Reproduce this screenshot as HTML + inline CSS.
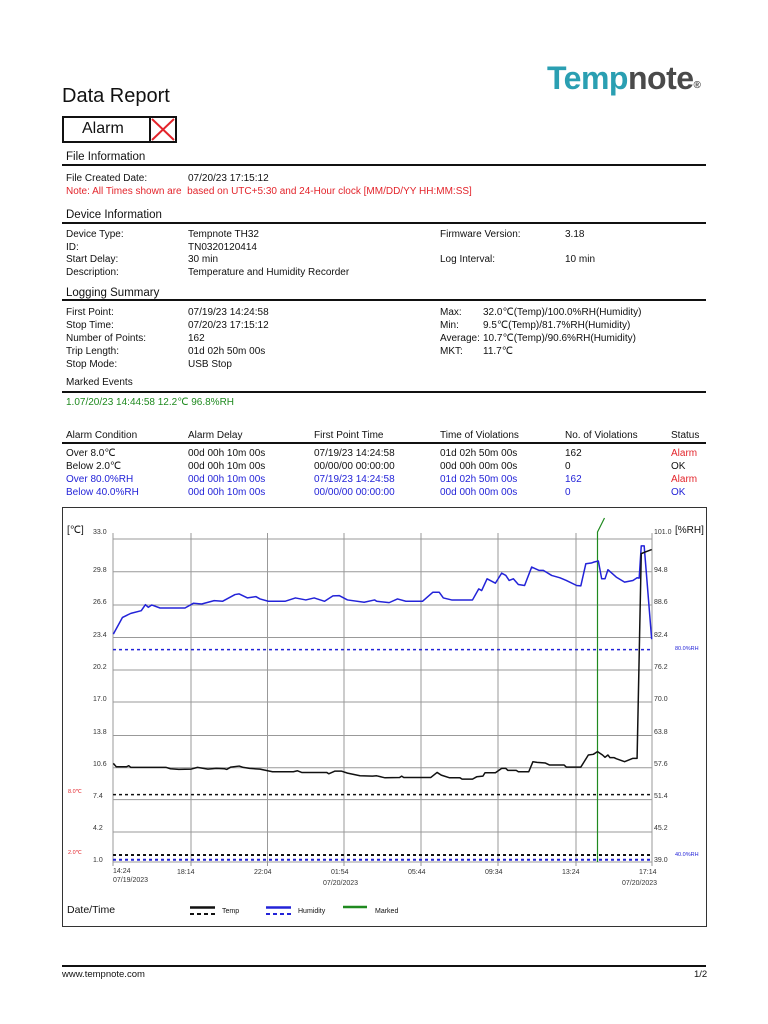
<!DOCTYPE html>
<html><head><meta charset="utf-8"><style>
*{margin:0;padding:0;box-sizing:border-box}
body{width:768px;height:1024px;background:#fff;position:relative;font-family:"Liberation Sans",Arial,sans-serif;color:#111;overflow:hidden}
.t{position:absolute;font-size:10px;line-height:12px;white-space:nowrap}
.h{position:absolute;font-size:11.5px;line-height:14px;white-space:nowrap;left:66px}
.ln{position:absolute;left:62px;width:644px;height:2px;background:#111}
.r{color:#e3242b}.b{color:#2323d8}.g{color:#1f8a1f}
</style></head><body>
<div class="t" style="left:62px;top:84px;font-size:20px;line-height:24px">Data Report</div>
<div style="position:absolute;left:547px;top:60px;font-size:32px;font-weight:bold;line-height:36px;letter-spacing:-0.5px"><span style="color:#2a9fb2">Temp</span><span style="color:#4a4a4a">note</span><sup style="font-size:10px;color:#4a4a4a;vertical-align:top;position:relative;top:8px">®</sup></div>
<div style="position:absolute;left:62px;top:116px;width:115px;height:27px;border:2px solid #111"></div>
<div style="position:absolute;left:149px;top:116px;width:2px;height:27px;background:#111"></div>
<svg style="position:absolute;left:151px;top:118px" width="24" height="23"><path d="M1 1L23 22M23 1L1 22" stroke="#e3242b" stroke-width="2"/></svg>
<div class="t" style="left:82px;top:120px;font-size:16px;line-height:18px">Alarm</div>

<div class="h" style="top:150px">File Information</div><div class="ln" style="top:164px"></div>
<div class="t" style="left:66px;top:173px">File Created Date:</div><div class="t" style="left:188px;top:173px">07/20/23 17:15:12</div>
<div class="t r" style="left:66px;top:186px">Note: All Times shown are&nbsp; based on UTC+5:30 and 24-Hour clock [MM/DD/YY HH:MM:SS]</div>

<div class="h" style="top:208px">Device Information</div><div class="ln" style="top:222px"></div>
<div class="t" style="left:66px;top:229px;line-height:12.7px">Device Type:<br>ID:<br>Start Delay:<br>Description:</div>
<div class="t" style="left:188px;top:229px;line-height:12.7px">Tempnote TH32<br>TN0320120414<br>30 min<br>Temperature and Humidity Recorder</div>
<div class="t" style="left:440px;top:229px">Firmware Version:</div><div class="t" style="left:565px;top:229px">3.18</div>
<div class="t" style="left:440px;top:254px">Log Interval:</div><div class="t" style="left:565px;top:254px">10 min</div>

<div class="h" style="top:286px">Logging Summary</div><div class="ln" style="top:299px"></div>
<div class="t" style="left:66px;top:306px;line-height:13px">First Point:<br>Stop Time:<br>Number of Points:<br>Trip Length:<br>Stop Mode:</div>
<div class="t" style="left:188px;top:306px;line-height:13px">07/19/23 14:24:58<br>07/20/23 17:15:12<br>162<br>01d 02h 50m 00s<br>USB Stop</div>
<div class="t" style="left:440px;top:306px;line-height:13px">Max:<br>Min:<br>Average:<br>MKT:</div>
<div class="t" style="left:483px;top:306px;line-height:13px">32.0℃(Temp)/100.0%RH(Humidity)<br>9.5℃(Temp)/81.7%RH(Humidity)<br>10.7℃(Temp)/90.6%RH(Humidity)<br>11.7℃</div>

<div class="t" style="left:66px;top:377px">Marked Events</div><div class="ln" style="top:391px;height:1.5px"></div>
<div class="t g" style="left:66px;top:397px">1.07/20/23 14:44:58 12.2℃ 96.8%RH</div>

<div class="t" style="left:66px;top:430px">Alarm Condition</div><div class="t" style="left:188px;top:430px">Alarm Delay</div><div class="t" style="left:314px;top:430px">First Point Time</div><div class="t" style="left:440px;top:430px">Time of Violations</div><div class="t" style="left:565px;top:430px">No. of Violations</div><div class="t" style="left:671px;top:430px">Status</div>
<div class="ln" style="top:442px;height:1.5px"></div>
<div class="t" style="left:66px;top:447px;line-height:13px">Over 8.0℃<br>Below 2.0℃<br><span class="b">Over 80.0%RH<br>Below 40.0%RH</span></div>
<div class="t" style="left:188px;top:447px;line-height:13px">00d 00h 10m 00s<br>00d 00h 10m 00s<br><span class="b">00d 00h 10m 00s<br>00d 00h 10m 00s</span></div>
<div class="t" style="left:314px;top:447px;line-height:13px">07/19/23 14:24:58<br>00/00/00 00:00:00<br><span class="b">07/19/23 14:24:58<br>00/00/00 00:00:00</span></div>
<div class="t" style="left:440px;top:447px;line-height:13px">01d 02h 50m 00s<br>00d 00h 00m 00s<br><span class="b">01d 02h 50m 00s<br>00d 00h 00m 00s</span></div>
<div class="t" style="left:565px;top:447px;line-height:13px">162<br>0<br><span class="b">162<br>0</span></div>
<div class="t" style="left:671px;top:447px;line-height:13px"><span class="r">Alarm</span><br>OK<br><span class="r">Alarm</span><br><span class="b">OK</span></div>

<div style="position:absolute;left:62px;top:507px;width:645px;height:420px;border:1.5px solid #333"></div>
<svg style="position:absolute;left:0;top:0" width="768" height="1024">
<g stroke="#999" stroke-width="1">
<path d="M113 539H652M113 571.7H652M113 605H652M113 637.5H652M113 670H652M113 702H652M113 735.5H652M113 767.7H652M113 799.6H652M113 832H652M113 862H652"/>
<path d="M113 533V866M191 533V866M267.5 533V866M344 533V866M421 533V866M498 533V866M576 533V866M652 533V866"/>
</g>
<g stroke-dasharray="3,3" stroke-width="1.5">
<path d="M113 649.6H652" stroke="#2323d8"/>
<path d="M113 794.6H652" stroke="#111"/>
<path d="M113 855H652" stroke="#111" stroke-width="2"/>
<path d="M113 859.7H652" stroke="#2323d8" stroke-width="2"/>
</g>
<path d="M597.5 862V532L604.5 518" stroke="#1f8a1f" stroke-width="1.2" fill="none"/>
<g transform="translate(60,510) scale(0.41667,0.3356)" fill="none" stroke-width="1.5" stroke-linejoin="round">
<polyline vector-effect="non-scaling-stroke" stroke="#2323d8" points="128,370 150,320 170,308 195,300 205,282 212,290 220,283 240,292 300,292 320,278 340,280 370,270 390,272 420,252 430,250 450,262 470,258 480,265 500,272 540,272 565,262 590,268 610,262 635,272 655,256 670,255 690,268 730,275 755,268 760,272 790,276 810,265 830,272 870,272 895,245 910,245 920,262 940,268 980,268 990,268 1005,235 1012,240 1025,205 1045,218 1060,188 1070,195 1078,210 1088,205 1100,222 1115,225 1132,170 1150,180 1160,180 1180,195 1200,202 1215,210 1240,225 1250,226 1262,160 1275,158 1282,155 1292,152 1300,205 1308,205 1315,178 1335,200 1355,215 1375,210 1385,202 1390,203 1395,107 1402,107 1420,385"/>
<polyline vector-effect="non-scaling-stroke" stroke="#111" points="128,755 135,765 160,765 165,762 170,767 255,767 265,771 285,773 315,772 330,767 355,772 375,770 395,771 400,773 410,766 430,763 440,767 455,770 480,772 510,780 560,780 570,777 580,782 640,782 645,786 660,778 675,778 690,784 720,792 750,793 760,792 780,798 815,797 820,793 825,797 890,797 905,782 915,790 935,798 960,798 965,802 990,802 1000,795 1015,793 1020,783 1045,783 1060,770 1070,770 1075,776 1095,776 1100,780 1125,780 1135,750 1145,752 1165,754 1175,760 1210,760 1215,766 1250,766 1268,730 1280,728 1290,720 1302,730 1308,737 1315,730 1320,738 1330,738 1335,741 1355,750 1375,740 1385,740 1395,130 1405,125 1420,118"/>
</g>
<g font-family="Liberation Sans,Arial,sans-serif" font-size="7" fill="#333">
<text x="93" y="534">33.0</text><text x="93" y="572">29.8</text><text x="93" y="604">26.6</text><text x="93" y="637">23.4</text><text x="93" y="669">20.2</text><text x="93" y="701">17.0</text><text x="93" y="734">13.8</text><text x="93" y="766">10.6</text><text x="93" y="798">7.4</text><text x="93" y="830">4.2</text><text x="93" y="862">1.0</text>
<text x="654" y="534">101.0</text><text x="654" y="572">94.8</text><text x="654" y="604">88.6</text><text x="654" y="637">82.4</text><text x="654" y="669">76.2</text><text x="654" y="701">70.0</text><text x="654" y="734">63.8</text><text x="654" y="766">57.6</text><text x="654" y="798">51.4</text><text x="654" y="830">45.2</text><text x="654" y="862">39.0</text>
<text x="68" y="793" fill="#e3242b" font-size="5.5">8.0℃</text><text x="68" y="854" fill="#e3242b" font-size="5.5">2.0℃</text>
<text x="675" y="650" fill="#2323d8" font-size="5.5">80.0%RH</text><text x="675" y="856" fill="#2323d8" font-size="5.5">40.0%RH</text>
<text x="113" y="873">14:24</text><text x="113" y="882">07/19/2023</text>
<text x="177" y="874">18:14</text><text x="254" y="874">22:04</text><text x="331" y="874">01:54</text><text x="323" y="885">07/20/2023</text>
<text x="408" y="874">05:44</text><text x="485" y="874">09:34</text><text x="562" y="874">13:24</text><text x="639" y="874">17:14</text><text x="622" y="885">07/20/2023</text>
</g>
<g font-family="Liberation Sans,Arial,sans-serif" fill="#111">
<text x="67" y="533" font-size="10">[℃]</text><text x="675" y="533" font-size="10">[%RH]</text>
<text x="67" y="913" font-size="10.5">Date/Time</text>
<text x="222" y="913" font-size="7">Temp</text><text x="298" y="913" font-size="7">Humidity</text><text x="375" y="913" font-size="7">Marked</text>
</g>
<path d="M190 907.5H215" stroke="#111" stroke-width="2.5"/><path d="M190 914H215" stroke="#111" stroke-width="2" stroke-dasharray="4,3"/>
<path d="M266 907.5H291" stroke="#2323d8" stroke-width="2.5"/><path d="M266 914H291" stroke="#2323d8" stroke-width="2" stroke-dasharray="4,3"/>
<path d="M343 907H367" stroke="#1f8a1f" stroke-width="2.5"/>
</svg>

<div class="ln" style="top:965px"></div>
<div class="t" style="left:62px;top:969px;font-size:9.5px">www.tempnote.com</div>
<div class="t" style="left:694px;top:969px;font-size:9.5px">1/2</div>
</body></html>
